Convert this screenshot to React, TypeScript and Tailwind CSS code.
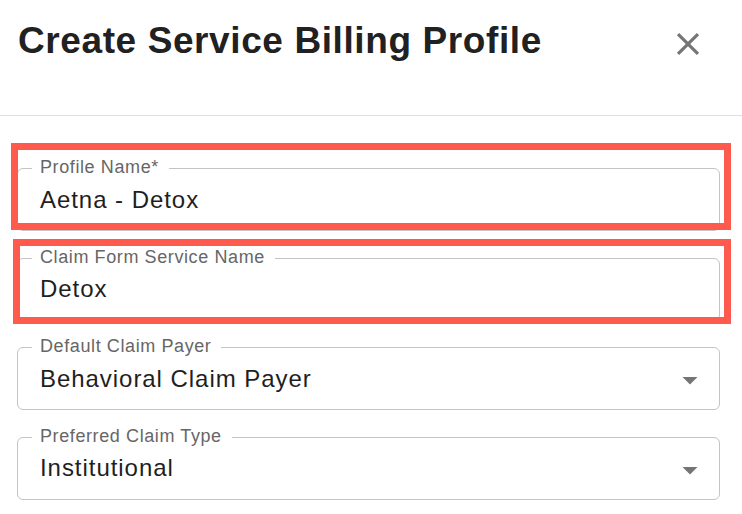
import React from 'react';

const fields = [
  { label: 'Profile Name*', value: 'Aetna - Detox', select: false },
  { label: 'Claim Form Service Name', value: 'Detox', select: false },
  { label: 'Default Claim Payer', value: 'Behavioral Claim Payer', select: true },
  { label: 'Preferred Claim Type', value: 'Institutional', select: true },
];

function CloseIcon() {
  return (
    <svg viewBox="0 0 24 24" className="w-[38px] h-[38px] fill-[#757575]">
      <path d="M19 6.41 17.59 5 12 10.59 6.41 5 5 6.41 10.59 12 5 17.59 6.41 19 12 13.41 17.59 19 19 17.59 13.41 12z" />
    </svg>
  );
}

function ArrowDropDown() {
  return (
    <svg viewBox="0 0 24 24" className="w-[36px] h-[36px] fill-[#757575]">
      <path d="M7 10l5 5 5-5z" />
    </svg>
  );
}

function OutlinedField({ label, value, select }: { label: string; value: string; select: boolean }) {
  return (
    <div className="relative h-[63px] w-[703px] rounded-[6px] border border-[#c4c4c4] flex items-center justify-between pl-[22px]">
      {/* notched label */}
      <span className="absolute -top-[11px] left-[14px] bg-white pl-[8px] pr-[10px] text-[18px] leading-[18px] tracking-[0.6px] text-[#666666]">
        {label}
      </span>
      <span className="text-[24px] leading-[24px] tracking-[0.95px] text-[#1f1f1f]">{value}</span>
      {select && (
        <span className="mr-[11px] mt-[3px]">
          <ArrowDropDown />
        </span>
      )}
    </div>
  );
}

export default function App() {
  return (
    <div className="relative w-[742px] h-[514px] overflow-hidden bg-white font-['Liberation_Sans',Arial,sans-serif]">
      {/* Header */}
      <div className="h-[116px] border-b border-[#e0e0e0] flex items-start justify-between pl-[18px] pr-[35px] pt-[22px]">
        <h1 className="text-[37px] leading-[37px] tracking-[0.6px] font-bold text-[#212121]">
          Create Service Billing Profile
        </h1>
        <button className="mt-[3px]">
          <CloseIcon />
        </button>
      </div>

      {/* Form */}
      <div className="flex flex-col gap-[26.5px] pl-[17px] pt-[52px]">
        {fields.map((f) => (
          <OutlinedField key={f.label} {...f} />
        ))}
      </div>

      {/* Highlight annotations */}
      <div className="absolute left-[11px] top-[143px] w-[720px] h-[87px] border-[7px] border-[#ff5a4e] pointer-events-none" />
      <div className="absolute left-[13px] top-[239px] w-[718px] h-[85px] border-[7px] border-[#ff5a4e] pointer-events-none" />
    </div>
  );
}
